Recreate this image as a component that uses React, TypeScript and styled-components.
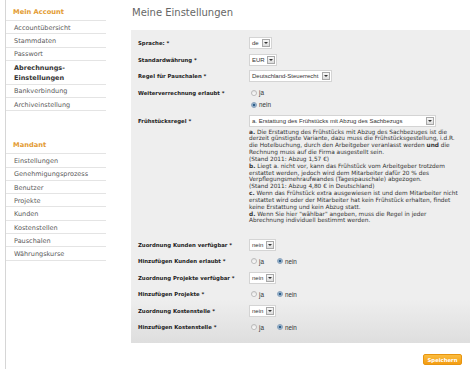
import React from "react";
import styled, { createGlobalStyle } from "styled-components";

const GlobalStyle = createGlobalStyle`
    html, body {
        margin: 0;
        padding: 0;
        background: #fff;
    }
    body {
        font-family: "DejaVu Sans", Verdana, sans-serif;
    }
`;

const Page = styled.div`
    display: flex;
    width: 470px;
    height: 369px;
    overflow: hidden;
`;

const Sidebar = styled.nav`
    flex-shrink: 0;
    width: 100px;
    margin-left: 5px;
    border-left: 1px solid #d6d6d6;
`;

const SideSection = styled.div<{ $gap?: number }>`
    margin-top: ${props => props.$gap ?? 0}px;
`;

const SideHeading = styled.div`
    padding: 8px 0 3px 7px;
    line-height: 9px;
    font-size: 6.7px;
    font-weight: bold;
    color: #e39b32;
    border-bottom: 1px solid #e4e4e4;
`;

const SideItem = styled.a<{ $active?: boolean }>`
    display: block;
    padding: 1.8px 0 0 8px;
    line-height: 10.5px;
    font-size: 6.5px;
    font-weight: ${props => (props.$active ? "bold" : "normal")};
    color: ${props => (props.$active ? "#333" : "#5a5a5a")};
    text-decoration: none;
    border-bottom: 1px solid #e4e4e4;
`;

const Main = styled.main`
    flex: 1;
    margin-left: 25px;
    display: flex;
    flex-direction: column;
`;

const Title = styled.h1`
    margin: 0 0 11px;
    padding: 7px 0 0 1px;
    font-size: 10px;
    line-height: 12px;
    font-weight: normal;
    color: #666;
`;

const Panel = styled.div`
    padding: 7px 0 10px 7px;
    background: linear-gradient(to bottom, #eeeeee 0, #eeeeee 270px, #dedede 100%);
`;

const Field = styled.div<{ $gap?: number }>`
    display: grid;
    grid-template-columns: 111px 1fr;
    margin-top: ${props => props.$gap ?? 4.5}px;
    &:first-child {
        margin-top: 0;
    }
`;

const Label = styled.div`
    font-size: 5.35px;
    line-height: 12px;
    font-weight: bold;
    color: #222;
`;

const Select = styled.div<{ $width: number }>`
    box-sizing: border-box;
    width: ${props => props.$width}px;
    height: 12px;
    padding: 0 1px 0 2px;
    display: flex;
    align-items: center;
    justify-content: space-between;
    background: #fff;
    border: 1px solid #d4d4d4;
    font-family: "Liberation Sans", Arial, sans-serif;
    font-size: 6px;
    color: #333;
    white-space: nowrap;
    overflow: hidden;
`;

const SelectArrow = styled.span`
    flex-shrink: 0;
    box-sizing: border-box;
    width: 8px;
    height: 8px;
    display: flex;
    align-items: center;
    justify-content: center;
    border: 1px solid #a8a8a8;
    background: linear-gradient(#f8f8f8, #dcdcdc);

    &::after {
        content: "";
        border-left: 2px solid transparent;
        border-right: 2px solid transparent;
        border-top: 2px solid #333;
    }
`;

const RadioGroup = styled.div<{ $stacked?: boolean }>`
    display: flex;
    flex-direction: ${props => (props.$stacked ? "column" : "row")};
    gap: ${props => (props.$stacked ? 0 : 11)}px;
`;

const RadioOption = styled.label`
    display: flex;
    align-items: center;
    gap: 2px;
    height: 12px;
    padding-left: 2px;
    font-family: "Liberation Sans", Arial, sans-serif;
    font-size: 6.3px;
    color: #333;
`;

const RadioDot = styled.span<{ $checked?: boolean }>`
    box-sizing: border-box;
    width: 6px;
    height: 6px;
    border-radius: 50%;
    border: 1px solid ${props => (props.$checked ? "#8aa2bb" : "#bbbbbb")};
    background: ${props =>
        props.$checked
            ? "radial-gradient(circle, #2f5f8a 0, #2f5f8a 1.1px, #a9c2da 1.7px)"
            : "linear-gradient(#e4e4e4, #fff)"};
`;

const Note = styled.div`
    margin-top: 1.5px;
    font-size: 5.8px;
    line-height: 6.85px;
    color: #333;
    white-space: nowrap;

    b {
        font-weight: bold;
    }
`;

const Footer = styled.div`
    display: flex;
    justify-content: flex-end;
    padding: 11px 8px 0 0;
`;

const SaveButton = styled.button`
    box-sizing: border-box;
    width: 39px;
    height: 11px;
    padding: 0;
    border: 1px solid #e8950f;
    border-radius: 2px;
    background: linear-gradient(#fbbd40, #f39c12);
    color: #fff;
    font-family: "DejaVu Sans", Verdana, sans-serif;
    font-size: 5.3px;
    font-weight: bold;
`;

function Dropdown({ value, width }: { value: string; width: number }) {
    return (
        <Select $width={width}>
            <span>{value}</span>
            <SelectArrow />
        </Select>
    );
}

function YesNo({ stacked }: { stacked?: boolean }) {
    return (
        <RadioGroup $stacked={stacked}>
            <RadioOption>
                <RadioDot />
                ja
            </RadioOption>
            <RadioOption>
                <RadioDot $checked />
                nein
            </RadioOption>
        </RadioGroup>
    );
}

const accountLinks = ["Accountübersicht", "Stammdaten", "Passwort"];
const accountLinksAfter = ["Bankverbindung", "Archiveinstellung"];
const mandantLinks = [
    "Einstellungen",
    "Genehmigungsprozess",
    "Benutzer",
    "Projekte",
    "Kunden",
    "Kostenstellen",
    "Pauschalen",
    "Währungskurse",
];

export default function App() {
    return (
        <>
            <GlobalStyle />
            <Page>
                <Sidebar>
                    <SideSection>
                        <SideHeading>Mein Account</SideHeading>
                        {accountLinks.map(link => (
                            <SideItem key={link}>{link}</SideItem>
                        ))}
                        <SideItem $active>
                            Abrechnungs-
                            <br />
                            Einstellungen
                        </SideItem>
                        {accountLinksAfter.map(link => (
                            <SideItem key={link}>{link}</SideItem>
                        ))}
                    </SideSection>
                    <SideSection $gap={22}>
                        <SideHeading>Mandant</SideHeading>
                        {mandantLinks.map(link => (
                            <SideItem key={link}>{link}</SideItem>
                        ))}
                    </SideSection>
                </Sidebar>

                <Main>
                    <Title>Meine Einstellungen</Title>
                    <Panel>
                        <Field>
                            <Label>Sprache: *</Label>
                            <Dropdown value="de" width={23} />
                        </Field>
                        <Field>
                            <Label>Standardwährung *</Label>
                            <Dropdown value="EUR" width={28} />
                        </Field>
                        <Field>
                            <Label>Regel für Pauschalen *</Label>
                            <Dropdown value="Deutschland-Steuerrecht" width={83} />
                        </Field>
                        <Field>
                            <Label>Weiterverrechnung erlaubt *</Label>
                            <YesNo stacked />
                        </Field>
                        <Field>
                            <Label>Frühstücksregel *</Label>
                            <div>
                                <Dropdown value="a. Erstattung des Frühstücks mit Abzug des Sachbezugs" width={187} />
                                <Note>
                                    <b>a.</b> Die Erstattung des Frühstücks mit Abzug des Sachbezuges ist die
                                    <br />
                                    derzeit günstigste Variante, dazu muss die Frühstücksgestellung, i.d.R.
                                    <br />
                                    die Hotelbuchung, durch den Arbeitgeber veranlasst werden <b>und</b> die
                                    <br />
                                    Rechnung muss auf die Firma ausgestellt sein.
                                    <br />
                                    (Stand 2011: Abzug 1,57 €)
                                    <br />
                                    <b>b.</b> Liegt a. nicht vor, kann das Frühstück vom Arbeitgeber trotzdem
                                    <br />
                                    erstattet werden, jedoch wird dem Mitarbeiter dafür 20 % des
                                    <br />
                                    Verpflegungsmehraufwandes (Tagespauschale) abgezogen.
                                    <br />
                                    (Stand 2011: Abzug 4,80 € in Deutschland)
                                    <br />
                                    <b>c.</b> Wenn das Frühstück extra ausgewiesen ist und dem Mitarbeiter nicht
                                    <br />
                                    erstattet wird oder der Mitarbeiter hat kein Frühstück erhalten, findet
                                    <br />
                                    keine Erstattung und kein Abzug statt.
                                    <br />
                                    <b>d.</b> Wenn Sie hier "wählbar" angeben, muss die Regel in jeder
                                    <br />
                                    Abrechnung individuell bestimmt werden.
                                </Note>
                            </div>
                        </Field>
                        <Field $gap={14.5}>
                            <Label>Zuordnung Kunden verfügbar *</Label>
                            <Dropdown value="nein" width={27} />
                        </Field>
                        <Field>
                            <Label>Hinzufügen Kunden erlaubt *</Label>
                            <YesNo />
                        </Field>
                        <Field>
                            <Label>Zuordnung Projekte verfügbar *</Label>
                            <Dropdown value="nein" width={27} />
                        </Field>
                        <Field>
                            <Label>Hinzufügen Projekte *</Label>
                            <YesNo />
                        </Field>
                        <Field>
                            <Label>Zuordnung Kostenstelle *</Label>
                            <Dropdown value="nein" width={27} />
                        </Field>
                        <Field>
                            <Label>Hinzufügen Kostenstelle *</Label>
                            <YesNo />
                        </Field>
                    </Panel>
                    <Footer>
                        <SaveButton>Speichern</SaveButton>
                    </Footer>
                </Main>
            </Page>
        </>
    );
}
